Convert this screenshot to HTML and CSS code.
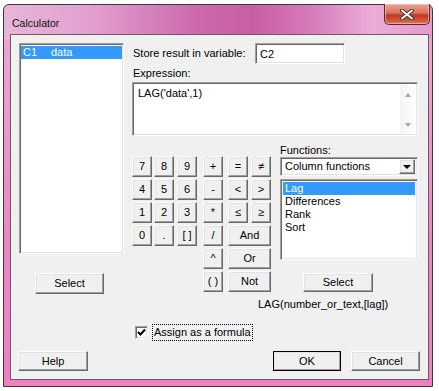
FILE: index.html
```html
<!DOCTYPE html>
<html>
<head>
<meta charset="utf-8">
<link rel="stylesheet" href="styles.css">
</head>
<body>
<div class="window">
  <div class="titlebar"><span class="title">Calculator</span></div>
  <div class="close">
    <svg width="14" height="11" viewBox="0 0 14 11"><path d="M2 1.5 L12 9.5 M12 1.5 L2 9.5" stroke="#3c3c3c" stroke-width="4" stroke-linecap="round"/><path d="M2 1.5 L12 9.5 M12 1.5 L2 9.5" stroke="#f4f4f4" stroke-width="2" stroke-linecap="round"/></svg>
  </div>
  <div class="client">
    <div class="main">
      <div class="left">
        <div class="sunken varlist">
          <div class="row sel"><span class="col">C1</span><span>data</span></div>
        </div>
        <div class="btn sel-left">Select</div>
      </div>
      <div class="right">
        <div class="store-row">
          <span class="store-label">Store result in variable:</span>
          <div class="sunken input">C2</div>
        </div>
        <div class="expr-label">Expression:</div>
        <div class="sunken textarea">
          <div class="expr-text">LAG('data',1)</div>
          <div class="vscroll"><span class="up"></span><span class="down"></span></div>
        </div>
        <div class="lower">
          <div class="keypad">
            <div class="btn key">7</div><div class="btn key">8</div><div class="btn key">9</div><div class="btn key">+</div><div class="btn key">=</div><div class="btn key">≠</div>
            <div class="btn key">4</div><div class="btn key">5</div><div class="btn key">6</div><div class="btn key">-</div><div class="btn key">&lt;</div><div class="btn key">&gt;</div>
            <div class="btn key">1</div><div class="btn key">2</div><div class="btn key">3</div><div class="btn key">*</div><div class="btn key">≤</div><div class="btn key">≥</div>
            <div class="btn key">0</div><div class="btn key">.</div><div class="btn key">[ ]</div><div class="btn key">/</div><div class="btn key wide">And</div>
            <div class="btn key c4">^</div><div class="btn key wide">Or</div>
            <div class="btn key c4">( )</div><div class="btn key wide">Not</div>
          </div>
          <div class="functions">
            <div class="fn-label">Functions:</div>
            <div class="sunken combo"><span class="combo-text">Column functions</span><span class="btn combo-btn"><span class="tri"></span></span></div>
            <div class="sunken fnlist">
              <div class="item sel">Lag</div>
              <div class="item">Differences</div>
              <div class="item">Rank</div>
              <div class="item">Sort</div>
            </div>
            <div class="btn sel-right">Select</div>
            <div class="syntax">LAG(number_or_text,[lag])</div>
          </div>
        </div>
      </div>
    </div>
    <div class="check-row">
      <span class="checkbox"><svg width="9" height="9" viewBox="0 0 9 9"><path d="M1 4 L3.5 6.5 L8 1.5" fill="none" stroke="#000" stroke-width="2"/></svg></span>
      <span class="check-label">Assign as a formula</span>
    </div>
    <div class="buttons">
      <div class="btn help">Help</div>
      <div class="btn ok">OK</div>
      <div class="btn cancel">Cancel</div>
    </div>
  </div>
</div>
</body>
</html>
```
FILE: styles.css
```css
html, body {
  margin: 0;
  padding: 0;
  background: #ffffff;
}
body {
  font-family: "Liberation Sans", Arial, sans-serif;
  font-size: 11px;
  color: #000;
}
.window {
  position: relative;
  box-sizing: border-box;
  width: 430px;
  height: 383px;
  margin: 4px 0 0 3px;
  border: 1px solid #3a3a3a;
  border-radius: 6px 6px 0 0;
  padding: 0 3px 6px 6px;
  background:
    linear-gradient(to right, #e8b6d9 0%, #e2a0cf 20%, #cc6aab 45%, #c75ea3 58%, #d77cb9 72%, #eaaed8 86%, #e49ad0 100%) top / 100% 34px no-repeat,
    linear-gradient(to bottom, #f0a9d6 0%, #ee86c6 60%, #ef7fc3 100%);
}
.titlebar {
  height: 29px;
  margin-left: 2px;
  box-sizing: border-box;
  padding-top: 12px;
}
.title {
  font-size: 10.5px;
  line-height: 12px;
  color: #111;
}
.close {
  position: absolute;
  top: -1px;
  right: 2px;
  width: 46px;
  height: 21px;
  box-sizing: border-box;
  border: 1px solid #5a2a28;
  border-top: none;
  border-radius: 0 0 5px 5px;
  background: linear-gradient(to bottom, #e9a294 0%, #d8755f 45%, #c2381d 55%, #d45a3d 85%, #e07b5e 100%);
  box-shadow: inset 0 0 0 1px rgba(255,220,210,0.5);
  display: flex;
  align-items: center;
  justify-content: center;
}
.client {
  box-sizing: border-box;
  width: 419px;
  height: 346px;
  border: 1px solid #6b5a66;
  background: #f0f0f0;
}
.main {
  display: flex;
  height: 289px;
  box-sizing: border-box;
  padding-top: 8px;
}
.sunken {
  box-sizing: border-box;
  background: #fff;
  border: 1px solid;
  border-color: #a0a0a0 #ffffff #ffffff #a0a0a0;
  box-shadow: inset 1px 1px 0 #696969, inset -1px -1px 0 #e3e3e3;
}
.btn {
  box-sizing: border-box;
  background: #f0f0f0;
  border: 1px solid;
  border-color: #ffffff #696969 #696969 #ffffff;
  box-shadow: inset -1px -1px 0 #a0a0a0, inset 1px 1px 0 #e3e3e3;
  display: flex;
  align-items: center;
  justify-content: center;
  line-height: 13px;
}
.left {
  margin-left: 8px;
  width: 105px;
  display: flex;
  flex-direction: column;
}
.varlist {
  height: 211px;
  padding: 2px 1px;
}
.row {
  height: 13px;
  line-height: 13px;
  padding-left: 2px;
  display: flex;
}
.row .col {
  width: 28px;
}
.sel {
  background: #3399ff;
  color: #fff;
}
.sel-left {
  margin-top: 19px;
  margin-left: 16px;
  width: 69px;
  height: 21px;
}
.right {
  margin-left: 8px;
  display: flex;
  flex-direction: column;
}
.store-row {
  display: flex;
  height: 21px;
  align-items: center;
}
.store-label {
  width: 123px;
  padding-left: 1px;
  box-sizing: border-box;
  line-height: 13px;
}
.input {
  width: 90px;
  height: 21px;
  padding: 4px 0 0 4px;
  line-height: 13px;
}
.expr-label {
  margin-top: 3px;
  line-height: 13px;
  padding-left: 1px;
}
.textarea {
  margin-top: 2px;
  width: 286px;
  height: 54px;
  display: flex;
  padding: 2px;
}
.expr-text {
  flex: 1;
  padding: 2px 0 0 3px;
  line-height: 13px;
}
.vscroll {
  width: 15px;
  background: linear-gradient(to right, #f4f4f4, #fdfdfd);
  display: flex;
  flex-direction: column;
  justify-content: space-between;
  align-items: center;
  padding: 8px 0 6px;
  box-sizing: border-box;
}
.up, .down {
  width: 0;
  height: 0;
  border-left: 3.5px solid transparent;
  border-right: 3.5px solid transparent;
}
.up { border-bottom: 4px solid #a8a8a8; }
.down { border-top: 4px solid #a8a8a8; }
.lower {
  display: flex;
  align-items: flex-start;
  margin-top: 8px;
}
.keypad {
  margin-top: 12px;
  display: grid;
  grid-template-columns: 22px 23px 26px 25px 23px 20px;
  grid-auto-rows: 21px;
  row-gap: 2px;
}
.key {
  width: 20px;
  height: 21px;
}
.key.wide {
  grid-column: 5 / span 2;
  width: 43px;
}
.key.c4 {
  grid-column: 4;
}
.functions {
  margin-left: 9px;
  width: 138px;
  display: flex;
  flex-direction: column;
}
.fn-label {
  line-height: 13px;
}
.combo {
  height: 19px;
  display: flex;
  align-items: center;
  padding: 2px;
}
.combo-text {
  flex: 1;
  padding-left: 2px;
  line-height: 13px;
}
.combo-btn {
  width: 16px;
  height: 15px;
}
.tri {
  width: 0;
  height: 0;
  border-left: 4px solid transparent;
  border-right: 4px solid transparent;
  border-top: 4px solid #000;
}
.fnlist {
  margin-top: 3px;
  height: 81px;
  padding: 2px;
}
.item {
  height: 13px;
  line-height: 13px;
  padding-left: 2px;
}
.sel-right {
  margin-top: 13px;
  margin-left: 23px;
  width: 70px;
  height: 19px;
}
.syntax {
  margin-top: 6px;
  margin-left: -22px;
  line-height: 13px;
  white-space: nowrap;
}
.check-row {
  display: flex;
  align-items: center;
  height: 17px;
  margin-left: 124px;
}
.checkbox {
  box-sizing: border-box;
  width: 13px;
  height: 13px;
  background: #fff;
  border: 1px solid;
  border-color: #a0a0a0 #ffffff #ffffff #a0a0a0;
  box-shadow: inset 1px 1px 0 #696969, inset -1px -1px 0 #e3e3e3;
  display: flex;
  align-items: center;
  justify-content: center;
}
.check-label {
  margin-left: 4px;
  height: 17px;
  box-sizing: border-box;
  border: 1px dotted #000;
  padding: 1px 1px 0 1px;
  line-height: 13px;
}
.buttons {
  display: flex;
  margin-top: 10px;
}
.help {
  margin-left: 7px;
  width: 70px;
  height: 20px;
}
.ok {
  margin-left: 185px;
  width: 68px;
  height: 20px;
  outline: 1px solid #000;
  outline-offset: -1px;
  border-color: #ffffff #404040 #404040 #ffffff;
}
.cancel {
  margin-left: 10px;
  width: 69px;
  height: 20px;
}
```
